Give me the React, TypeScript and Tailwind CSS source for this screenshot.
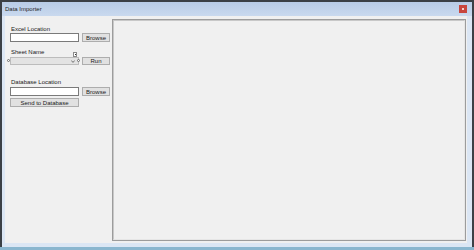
import React from "react";

const font = { fontFamily: '"Liberation Sans", Arial, sans-serif' };

function Btn({ label, w, h }: { label: string; w: string; h: string }) {
  return (
    <div
      className={`${w} ${h} flex items-center justify-center border border-[#adadad] bg-[#e1e1e1] text-[6px] leading-none text-[#1a1a1a]`}
    >
      {label}
    </div>
  );
}

function Label({ text, mt }: { text: string; mt: string }) {
  return (
    <div className={`${mt} h-[7px] pl-[1px] text-[6px] leading-[7px] text-[#1a1a1a] whitespace-nowrap`}>
      {text}
    </div>
  );
}

export default function App() {
  return (
    <div className="w-[474px] h-[250px] bg-[#3b4046] flex flex-col overflow-hidden" style={font}>
      <div className="h-[247px] pt-[2px] px-[2px] flex flex-col">
        <div className="flex-1 flex flex-col bg-[#dbe6f4]">
          {/* title bar */}
          <div className="h-[14px] flex items-center justify-between pl-[3px] pr-[5px] bg-gradient-to-b from-[#b8cce7] to-[#c9d9ee]">
            <span className="text-[6px] leading-none text-[#1e1e1e]">Data Importer</span>
            <div className="w-[8px] h-[8px] bg-[#c8463e] flex items-center justify-center">
              <div className="w-[2px] h-[2px] bg-[#f3d0cc]" />
            </div>
          </div>
          {/* body */}
          <div className="flex-1 flex pl-[3px] pr-[5px] pb-[4px]">
            <div className="flex-1 flex bg-[#f0f0f0]">
              {/* left controls */}
              <div className="w-[107px] pl-[5px] flex flex-col relative">
                <Label text="Excel Location" mt="mt-[10px]" />
                <div className="h-[9px] flex gap-[3px]">
                  <div className="w-[69px] h-full bg-white border border-[#7a7a7a]" />
                  <Btn label="Browse" w="w-[28px]" h="h-[9px]" />
                </div>
                <Label text="Sheet Name" mt="mt-[7px]" />
                <div className="mt-[1px] h-[8px] flex gap-[3px] relative">
                  <div className="w-[69px] h-full bg-[#e3e3e3] border border-[#bcbcbc] flex items-center justify-end pr-[3px]">
                    <svg width="4" height="3" viewBox="0 0 4 3">
                      <path d="M0.3 0.5 L2 2.4 L3.7 0.5" fill="none" stroke="#555" strokeWidth="0.8" />
                    </svg>
                  </div>
                  <Btn label="Run" w="w-[28px]" h="h-[8px]" />
                  {/* designer handles */}
                  <div className="absolute left-[-3px] top-[2px] w-[3px] h-[3px] rounded-full bg-white border border-[#6a6a6a]" />
                  <div className="absolute left-[67px] top-[2px] w-[3px] h-[3px] rounded-full bg-white border border-[#6a6a6a]" />
                  <div className="absolute left-[63px] top-[-5px] w-[4px] h-[5px] bg-white border border-[#8a8a8a] flex items-center justify-center">
                    <div className="w-[1px] h-[1px] bg-[#333]" />
                  </div>
                </div>
                <Label text="Database Location" mt="mt-[14px]" />
                <div className="mt-[1px] h-[9px] flex gap-[3px]">
                  <div className="w-[69px] h-full bg-white border border-[#7a7a7a]" />
                  <Btn label="Browse" w="w-[28px]" h="h-[9px]" />
                </div>
                <div className="mt-[2px]">
                  <Btn label="Send to Database" w="w-[69px]" h="h-[9px]" />
                </div>
              </div>
              {/* panel */}
              <div className="flex-1 mt-[3px] mb-[2px] mr-[1px] border border-[#9c9c9c] bg-[#f0f0f0]">
                <div className="w-full h-full border border-t-[#c8c8c8] border-l-[#c8c8c8] border-b-[#e6e6e6] border-r-[#e6e6e6]" />
              </div>
            </div>
          </div>
        </div>
      </div>
      <div className="flex-1 bg-[#8ab6cf]" />
    </div>
  );
}
